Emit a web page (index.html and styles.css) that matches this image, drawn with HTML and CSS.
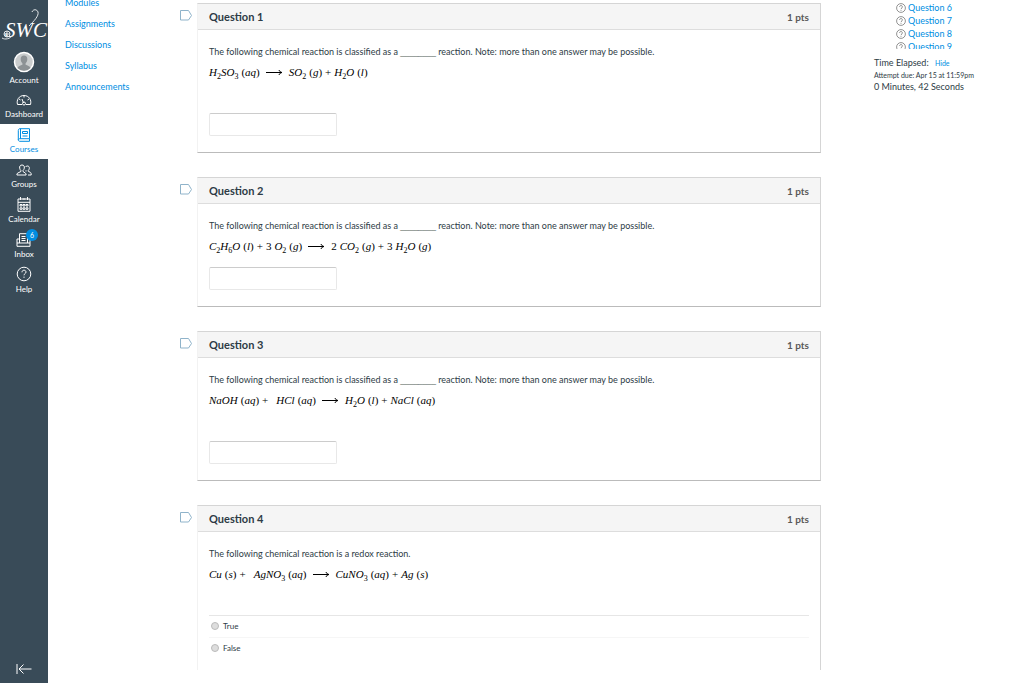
FILE: index.html
```
<!DOCTYPE html>
<html lang="en">
  <head>
    <meta charset="UTF-8" />
    <meta name="viewport" content="width=device-width, initial-scale=1" />
    <title>Quiz</title>
    <link rel="stylesheet" href="styles.css">
  </head>
  <body>
    <div class="app">
      <nav class="global-nav">
        <a class="logo" href="#" aria-label="SWC">
          <svg width="48" height="44" viewBox="0 0 48 44">
            <text x="5" y="37" font-size="21">SWC</text>
            <path d="M29 26 C34 21 39 16 38 12 C37 9 33 9 32 12" />
            <path d="M2 38 C5 40 10 39 13 35" />
            <circle cx="7" cy="34" r="3" />
            <path d="M7 31v6M4 34h6" />
          </svg>
        </a>
        <a class="nav-item nav-account" href="#">
          <svg width="22" height="22" viewBox="0 0 22 22">
            <circle cx="11" cy="11" r="9.5" fill="#c9cccd" stroke="#fff" stroke-width="1.5" />
            <path d="M11 4.5c-2.4 0-3.5 1.700-3.300 4 .1 1.700.8 2.900 1.700 3.700v1.500c-1.800.7-4.300 1.300-4.900 3.300a9 9 0 0 0 13 0c-.6-2-3.100-2.600-4.900-3.300v-1.500c.9-.8 1.600-2 1.700-3.700.2-2.300-.9-4-3.300-4z" fill="#8d9295" />
          </svg>
          <span>Account</span>
        </a>
        <a class="nav-item" href="#">
          <svg class="icon" width="16" height="14" viewBox="0 0 16 14">
            <path d="M1.500 11.500C.2 7 3 2.500 8 2.500s7.800 4.500 6.500 9H10M1.500 11.500H6M8 2.500v2M3 6l1.500 1M13 6l-1.500 1M6 6l1.500 4" />
            <circle cx="8" cy="10.500" r="1.500" />
          </svg>
          <span>Dashboard</span>
        </a>
        <a class="nav-item active" href="#">
          <svg class="icon" width="14" height="14" viewBox="0 0 14 14">
            <path d="M3 .7h9.500v10H3M3 .7C1.800.7 1.300 1.500 1.300 2.500v9.300c0 1 .7 1.500 1.700 1.500h9.500v-2.600M3 10.700c-1 0-1.700.5-1.700 1.200M3.500.7v10M5.500 3.500h5v2h-5zM5.500 8h5" />
          </svg>
          <span>Courses</span>
        </a>
        <a class="nav-item" href="#">
          <svg class="icon" width="16" height="14" viewBox="0 0 16 14">
            <path d="M6 2c-2 0-2.600 1.500-2.300 3.200.1 1 .6 1.800 1.200 2.300v1L1.500 10.200c-.5.500-.6 1.100-.6 1.800h9.200c0-.8 0-1.400-.6-1.800L7 8.500v-1c.7-.6 1.100-1.300 1.300-2.300C8.600 3.500 8 2 6 2z" />
            <path d="M9.500 4c.4-.7 1-1 1.800-1 1.500 0 2.200 1 2 2.400-.1.900-.5 1.500-1 1.900v1l2 1c.8.500.9 1.300.9 2.700H12M10 8.500v-1.200" />
          </svg>
          <span>Groups</span>
        </a>
        <a class="nav-item" href="#">
          <svg class="icon" width="14" height="15" viewBox="0 0 14 15">
            <path d="M1 2h12v12.300H1zM1 5.300h12M3.500 0v3M10.500 0v3M5.500 2h3" />
            <path d="M3 7.500h2v1.500H3zM6 7.500h2v1.500H6zM9 7.500h2v1.500H9zM3 10.800h2v1.500H3zM6 10.800h2v1.500H6zM9 10.800h2v1.500H9z" />
          </svg>
          <span>Calendar</span>
        </a>
        <a class="nav-item" href="#">
          <svg class="icon" width="16" height="14" viewBox="0 0 16 14">
            <path d="M3.500 10V.7h8V10M1 6v7.300h13V6M1 10h13M1 6h2.500M11.500 6H14M5.500 3.500h4M5.500 5.500h4M5.500 7.500h4" />
          </svg>
          <span>Inbox</span>
          <b class="badge">6</b>
        </a>
        <a class="nav-item" href="#">
          <svg class="icon" width="16" height="16" viewBox="0 0 16 16">
            <circle cx="8" cy="8" r="6.800" />
            <path d="M6 6.300C6 5 6.800 4.200 8 4.200s2 .8 2 1.900c0 1.500-2 1.500-2 3.200M8 10.600v1.200" />
          </svg>
          <span>Help</span>
        </a>
        <button class="nav-toggle" type="button" aria-label="Minimize navigation">
          <svg class="icon" width="16" height="12" viewBox="0 0 16 12">
            <path d="M1 1v10M3 6h12.500M7.500 1.500L3 6l4.500 4.500" />
          </svg>
        </button>
      </nav>

      <div class="course-menu">
        <a href="#">Modules</a>
        <a href="#">Assignments</a>
        <a href="#">Discussions</a>
        <a href="#">Syllabus</a>
        <a href="#">Announcements</a>
      </div>

      <main class="questions">
        <section class="question-row">
          <button class="flag" type="button" aria-label="Flag question 1">
            <svg width="12" height="11" viewBox="0 0 12 11"><path d="M.5.500h8L11.500 5.500 8.500 10h-8z" /></svg>
          </button>
          <div class="question">
            <header><h2>Question 1</h2><span class="points">1 pts</span></header>
            <div class="question-body">
              <p id="q1">The following chemical reaction is classified as a <span class="blank">________</span> reaction. Note: more than one answer may be possible.</p>
              <p class="equation"><span><i>H</i><sub>2</sub><i>SO</i><sub>3</sub></span><span>(<i>aq</i>)</span><svg class="arrow" width="17" height="7" viewBox="0 0 17 7"><path d="M0 3.500h16M13 1c.5 1.500 1.500 2.200 3 2.500-1.500.3-2.500 1-3 2.500" /></svg><span><i>SO</i><sub>2</sub></span><span>(<i>g</i>)</span><span>+</span><span><i>H</i><sub>2</sub><i>O</i></span><span>(<i>l</i>)</span></p>
              <p></p>
              <input class="answer" type="text" aria-labelledby="q1">
            </div>
          </div>
        </section>

        <section class="question-row">
          <button class="flag" type="button" aria-label="Flag question 2">
            <svg width="12" height="11" viewBox="0 0 12 11"><path d="M.5.500h8L11.500 5.500 8.500 10h-8z" /></svg>
          </button>
          <div class="question">
            <header><h2>Question 2</h2><span class="points">1 pts</span></header>
            <div class="question-body">
              <p id="q2">The following chemical reaction is classified as a <span class="blank">________</span> reaction. Note: more than one answer may be possible.</p>
              <p class="equation"><span><i>C</i><sub>2</sub><i>H</i><sub>6</sub><i>O</i></span><span>(<i>l</i>)</span><span>+</span><span>3</span><span><i>O</i><sub>2</sub></span><span>(<i>g</i>)</span><svg class="arrow" width="17" height="7" viewBox="0 0 17 7"><path d="M0 3.500h16M13 1c.5 1.500 1.500 2.200 3 2.500-1.500.3-2.500 1-3 2.500" /></svg><span>2</span><span><i>CO</i><sub>2</sub></span><span>(<i>g</i>)</span><span>+</span><span>3</span><span><i>H</i><sub>2</sub><i>O</i></span><span>(<i>g</i>)</span></p>
              <input class="answer" type="text" aria-labelledby="q2">
            </div>
          </div>
        </section>

        <section class="question-row">
          <button class="flag" type="button" aria-label="Flag question 3">
            <svg width="12" height="11" viewBox="0 0 12 11"><path d="M.5.500h8L11.500 5.500 8.500 10h-8z" /></svg>
          </button>
          <div class="question">
            <header><h2>Question 3</h2><span class="points">1 pts</span></header>
            <div class="question-body">
              <p id="q3">The following chemical reaction is classified as a <span class="blank">________</span> reaction. Note: more than one answer may be possible.</p>
              <p class="equation"><span><i>NaOH</i></span><span>(<i>aq</i>)</span><span class="wide">+</span><span><i>HCl</i></span><span>(<i>aq</i>)</span><svg class="arrow" width="17" height="7" viewBox="0 0 17 7"><path d="M0 3.500h16M13 1c.5 1.500 1.500 2.200 3 2.500-1.500.3-2.500 1-3 2.500" /></svg><span><i>H</i><sub>2</sub><i>O</i></span><span>(<i>l</i>)</span><span>+</span><span><i>NaCl</i></span><span>(<i>aq</i>)</span></p>
              <p></p>
              <input class="answer" type="text" aria-labelledby="q3">
            </div>
          </div>
        </section>

        <section class="question-row">
          <button class="flag" type="button" aria-label="Flag question 4">
            <svg width="12" height="11" viewBox="0 0 12 11"><path d="M.5.500h8L11.500 5.500 8.500 10h-8z" /></svg>
          </button>
          <div class="question">
            <header><h2>Question 4</h2><span class="points">1 pts</span></header>
            <div class="question-body">
              <p>The following chemical reaction is a redox reaction.</p>
              <p class="equation"><span><i>Cu</i></span><span>(<i>s</i>)</span><span class="wide">+</span><span><i>AgNO</i><sub>3</sub></span><span>(<i>aq</i>)</span><svg class="arrow" width="17" height="7" viewBox="0 0 17 7"><path d="M0 3.500h16M13 1c.5 1.500 1.500 2.200 3 2.500-1.500.3-2.500 1-3 2.500" /></svg><span><i>CuNO</i><sub>3</sub></span><span>(<i>aq</i>)</span><span>+</span><span><i>Ag</i></span><span>(<i>s</i>)</span></p>
              <p></p>
              <div class="choices">
                <label><input type="radio" name="q4"> True</label>
                <label><input type="radio" name="q4"> False</label>
              </div>
            </div>
          </div>
        </section>
      </main>

      <aside class="sidebar">
        <ul class="question-list">
          <li><svg width="10" height="10" viewBox="0 0 10 10"><circle cx="5" cy="5" r="4.400" /><path d="M3.600 4C3.600 2 6.400 2 6.400 4 6.400 5 5 5 5 6.200M5 7v.8" /></svg><a href="#">Question 6</a></li>
          <li><svg width="10" height="10" viewBox="0 0 10 10"><circle cx="5" cy="5" r="4.400" /><path d="M3.600 4C3.600 2 6.400 2 6.400 4 6.400 5 5 5 5 6.200M5 7v.8" /></svg><a href="#">Question 7</a></li>
          <li><svg width="10" height="10" viewBox="0 0 10 10"><circle cx="5" cy="5" r="4.400" /><path d="M3.600 4C3.600 2 6.400 2 6.400 4 6.400 5 5 5 5 6.200M5 7v.8" /></svg><a href="#">Question 8</a></li>
          <li><svg width="10" height="10" viewBox="0 0 10 10"><circle cx="5" cy="5" r="4.400" /><path d="M3.600 4C3.600 2 6.400 2 6.400 4 6.400 5 5 5 5 6.200M5 7v.8" /></svg><a href="#">Question 9</a></li>
        </ul>
        <div class="timer">
          <div>Time Elapsed: <a href="#">Hide</a></div>
          <small>Attempt due: Apr 15 at 11:59pm</small>
          <div>0 Minutes, 42 Seconds</div>
        </div>
      </aside>
    </div>
  </body>
</html>
```

FILE: styles.css
```
* {
  box-sizing: border-box;
}

body {
  margin: 0;
  font-family: Lato, "Liberation Sans", sans-serif;
  font-size: 9px;
  color: #2d3b45;
  background: #fff;
}

a {
  color: #008ee2;
  text-decoration: none;
}

button {
  padding: 0;
  border: none;
  background: none;
  cursor: pointer;
}

svg {
  display: block;
  fill: none;
}

.app {
  display: flex;
  height: 100vh;
  overflow: hidden;
}

/* Global navigation */
.global-nav {
  display: flex;
  flex-direction: column;
  flex: none;
  width: 48px;
  background: #394b58;
}

.logo {
  height: 48px;
}

.logo text {
  font-family: "Liberation Serif", serif;
  font-style: italic;
  fill: #fff;
}

.logo path,
.logo circle {
  stroke: #e4e8ea;
}

.nav-item {
  display: flex;
  flex-direction: column;
  align-items: center;
  justify-content: flex-end;
  position: relative;
  height: 35px;
  padding-bottom: 4px;
  font-size: 8px;
  line-height: 12px;
  color: #fff;
}

.nav-item span {
  margin-top: 1px;
}

.nav-account {
  height: 41px;
  padding-bottom: 3px;
}

.nav-item.active {
  color: #008ee2;
  background: #fff;
}

.icon {
  stroke: currentColor;
}

.badge {
  position: absolute;
  top: 0;
  right: 10px;
  width: 12px;
  height: 12px;
  border-radius: 50%;
  background: #008ee2;
  font-size: 7px;
  font-weight: normal;
  text-align: center;
}

.nav-toggle {
  display: flex;
  justify-content: center;
  margin-top: auto;
  padding-bottom: 8px;
  color: #fff;
}

/* Course menu */
.course-menu {
  display: flex;
  flex-direction: column;
  flex: none;
  width: 132px;
  margin-top: -8px;
  padding-left: 17px;
  line-height: 21px;
}

/* Questions */
.questions {
  display: flex;
  flex-direction: column;
  flex: 1;
  gap: 24px;
  margin-bottom: 13px;
  padding-top: 3px;
  overflow: hidden;
}

.question-row {
  display: flex;
  flex: none;
  align-items: flex-start;
  gap: 5px;
}

.flag {
  margin-top: 7px;
}

.flag path {
  stroke: #8fb3ca;
}

.question {
  flex: 1;
  border: 1px solid #d5d5d5;
  border-left-color: #f2f2f2;
  border-bottom-color: #bbb;
}

.question header {
  display: flex;
  align-items: center;
  justify-content: space-between;
  height: 26px;
  padding: 0 11px;
  border-bottom: 1px solid #ddd;
  background: #f5f5f5;
}

.question h2 {
  margin: 0;
  font-size: 11px;
}

.points {
  font-size: 10px;
  font-weight: bold;
  color: #595959;
}

.question-body {
  padding: 14px 11px 16px;
}

.question-body p {
  height: 16px;
  margin: 0 0 4px;
  line-height: 16px;
}

/* Lato leaves gaps between underscores */
.blank {
  font-family: "Liberation Sans", sans-serif;
  font-size: 8px;
}

.question-body .equation {
  display: flex;
  align-items: center;
  gap: 3px;
  font-family: "Liberation Serif", serif;
  font-size: 11px;
  color: #000;
}

.equation sub {
  font-size: 8px;
  line-height: 1px;
}

.equation .wide {
  margin-right: 5px;
}

.arrow {
  margin: 0 3px;
  stroke: #000;
}

.answer {
  display: block;
  width: 128px;
  height: 23px;
  margin-top: 13px;
  border: 1px solid #e8e8e8;
  border-top-color: #ccc;
  border-radius: 2px;
}

.choices {
  margin-top: 13px;
  padding-bottom: 20px;
  font-size: 8px;
}

.choices label {
  display: flex;
  align-items: center;
  gap: 4px;
  height: 22px;
  padding: 0 0 2px 2px;
  border-top: 1px solid #f6f6f6;
}

.choices label:first-child {
  border-top-color: #e6e6e6;
}

.choices input {
  appearance: none;
  width: 8px;
  height: 8px;
  margin: 0;
  border: 1px solid #bbb;
  border-radius: 50%;
  background: #ddd;
}

/* Right sidebar */
.sidebar {
  flex: none;
  width: 203px;
  padding-left: 53px;
}

.question-list {
  height: 49px;
  margin: 0;
  padding: 1px 0 0 22px;
  overflow: hidden;
  list-style: none;
}

.question-list li {
  display: flex;
  align-items: center;
  gap: 2px;
  height: 13px;
}

.question-list svg {
  stroke: #666;
  stroke-width: 0.7;
}

.timer {
  margin-top: 8px;
  line-height: 12px;
}

.timer a {
  margin-left: 4px;
  font-size: 7px;
}

.timer small {
  display: block;
  font-size: 7px;
}
```
